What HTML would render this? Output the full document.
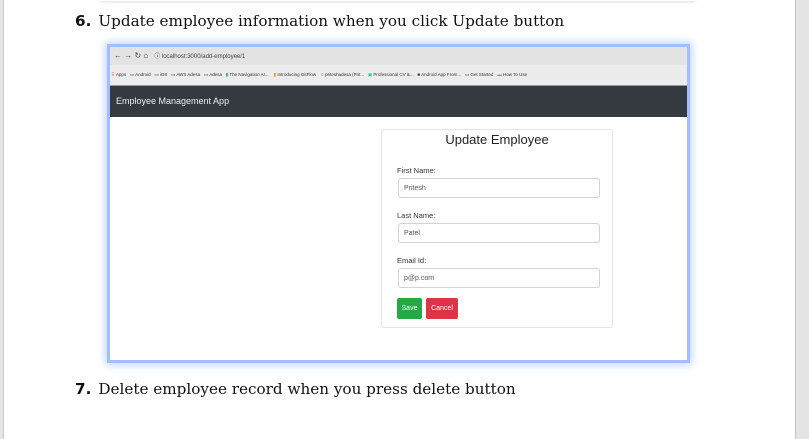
<!DOCTYPE html>
<html><head><style>
body{margin:0;width:809px;height:439px;background:#fff;position:relative;overflow:hidden;font-family:"Liberation Serif",serif}
.ab{position:absolute}
.h{font-family:"DejaVu Serif",serif;font-size:15.2px;color:#111;white-space:nowrap}
.h b{font-family:"DejaVu Sans",sans-serif;font-weight:bold;margin-right:7px}
.s{font-family:"Liberation Sans",sans-serif}
.inp{position:absolute;left:16px;height:20px;border:1px solid #ced4da;border-radius:3px;font-size:7px;color:#555;line-height:20px;padding-left:5px;box-sizing:border-box;width:202px}
.lbl{position:absolute;left:15px;font-size:7.5px;color:#333}
</style></head><body>
<div class="ab" style="left:0;top:0;width:3px;height:439px;background:#e4e4e4;border-right:1px solid #c8c8c8"></div>
<div class="ab" style="left:795px;top:0;width:14px;height:439px;background:#e4e4e4;border-left:1px solid #c0c0c0"></div>
<div class="ab" style="left:100px;top:-4px;width:595px;height:5px;box-shadow:0 1px 3px #d8e0ee"></div>
<div class="ab h" style="left:75px;top:12px"><b>6.</b>Update employee information when you click Update button</div>
<div class="ab h" style="left:75px;top:380px"><b>7.</b>Delete employee record when you press delete button</div>
<div class="ab s" style="left:110px;top:47px;width:577px;height:313px;background:#fff;box-shadow:0 0 0 3px #a3beff,0 0 8px 5px #c2d4ff;overflow:hidden">
 <div class="ab" style="left:0;top:0;width:577px;height:18px;background:#e3e3e3;font-size:6px;color:#444;line-height:18px">
  <span style="margin-left:4px;font-size:8px">← → ↻ ⌂</span><span style="margin-left:6px">ⓘ localhost:3000/add-employee/1</span></div>
 <div class="ab" style="left:0;top:18px;width:577px;height:20px;background:#ececec;font-size:4.5px;color:#333;line-height:20px;white-space:nowrap;border-bottom:1px solid #999">
  &nbsp;<span style="color:#d40">⠿</span> Apps &nbsp; ▭ Android &nbsp; ▭ iOS &nbsp; ▭ AWS Adesa &nbsp; ▭ Adesa &nbsp; <span style="color:#2a7">▮</span> The Navigation Ar... &nbsp;&nbsp; <span style="color:#e90">▮</span> Introducing GitFlow &nbsp;&nbsp; ○ priteshadesa (Prit... &nbsp; <span style="color:#2c9">▣</span> Professional CV &amp;... &nbsp; ■ Android App From... &nbsp; ▭ Get Started &nbsp; <span style="color:#59f">▬</span> How To Use</div>
 <div class="ab" style="left:0;top:39px;width:577px;height:31px;background:#343a40;color:#eee;font-size:9px;line-height:31px;padding-left:6px;box-sizing:border-box">Employee Management App</div>
 <div class="ab" style="left:271px;top:82px;width:232px;height:199px;border:1px solid #e4e4e4;border-radius:3px;box-sizing:border-box">
  <div class="ab" style="left:0;top:2px;width:230px;text-align:center;font-size:13px;color:#222">Update Employee</div>
  <div class="lbl" style="top:36px">First Name:</div>
  <div class="inp" style="top:48px">Pritesh</div>
  <div class="lbl" style="top:81px">Last Name:</div>
  <div class="inp" style="top:93px">Patel</div>
  <div class="lbl" style="top:126px">Email Id:</div>
  <div class="inp" style="top:138px">p@p.com</div>
  <div class="ab" style="left:15px;top:168px;width:25px;height:21px;background:#28a745;border-radius:2px;color:#fff;font-size:7px;line-height:21px;text-align:center">Save</div>
  <div class="ab" style="left:44px;top:168px;width:32px;height:21px;background:#dc3545;border-radius:2px;color:#fff;font-size:7px;line-height:21px;text-align:center">Cancel</div>
 </div>
</div>
</body></html>
